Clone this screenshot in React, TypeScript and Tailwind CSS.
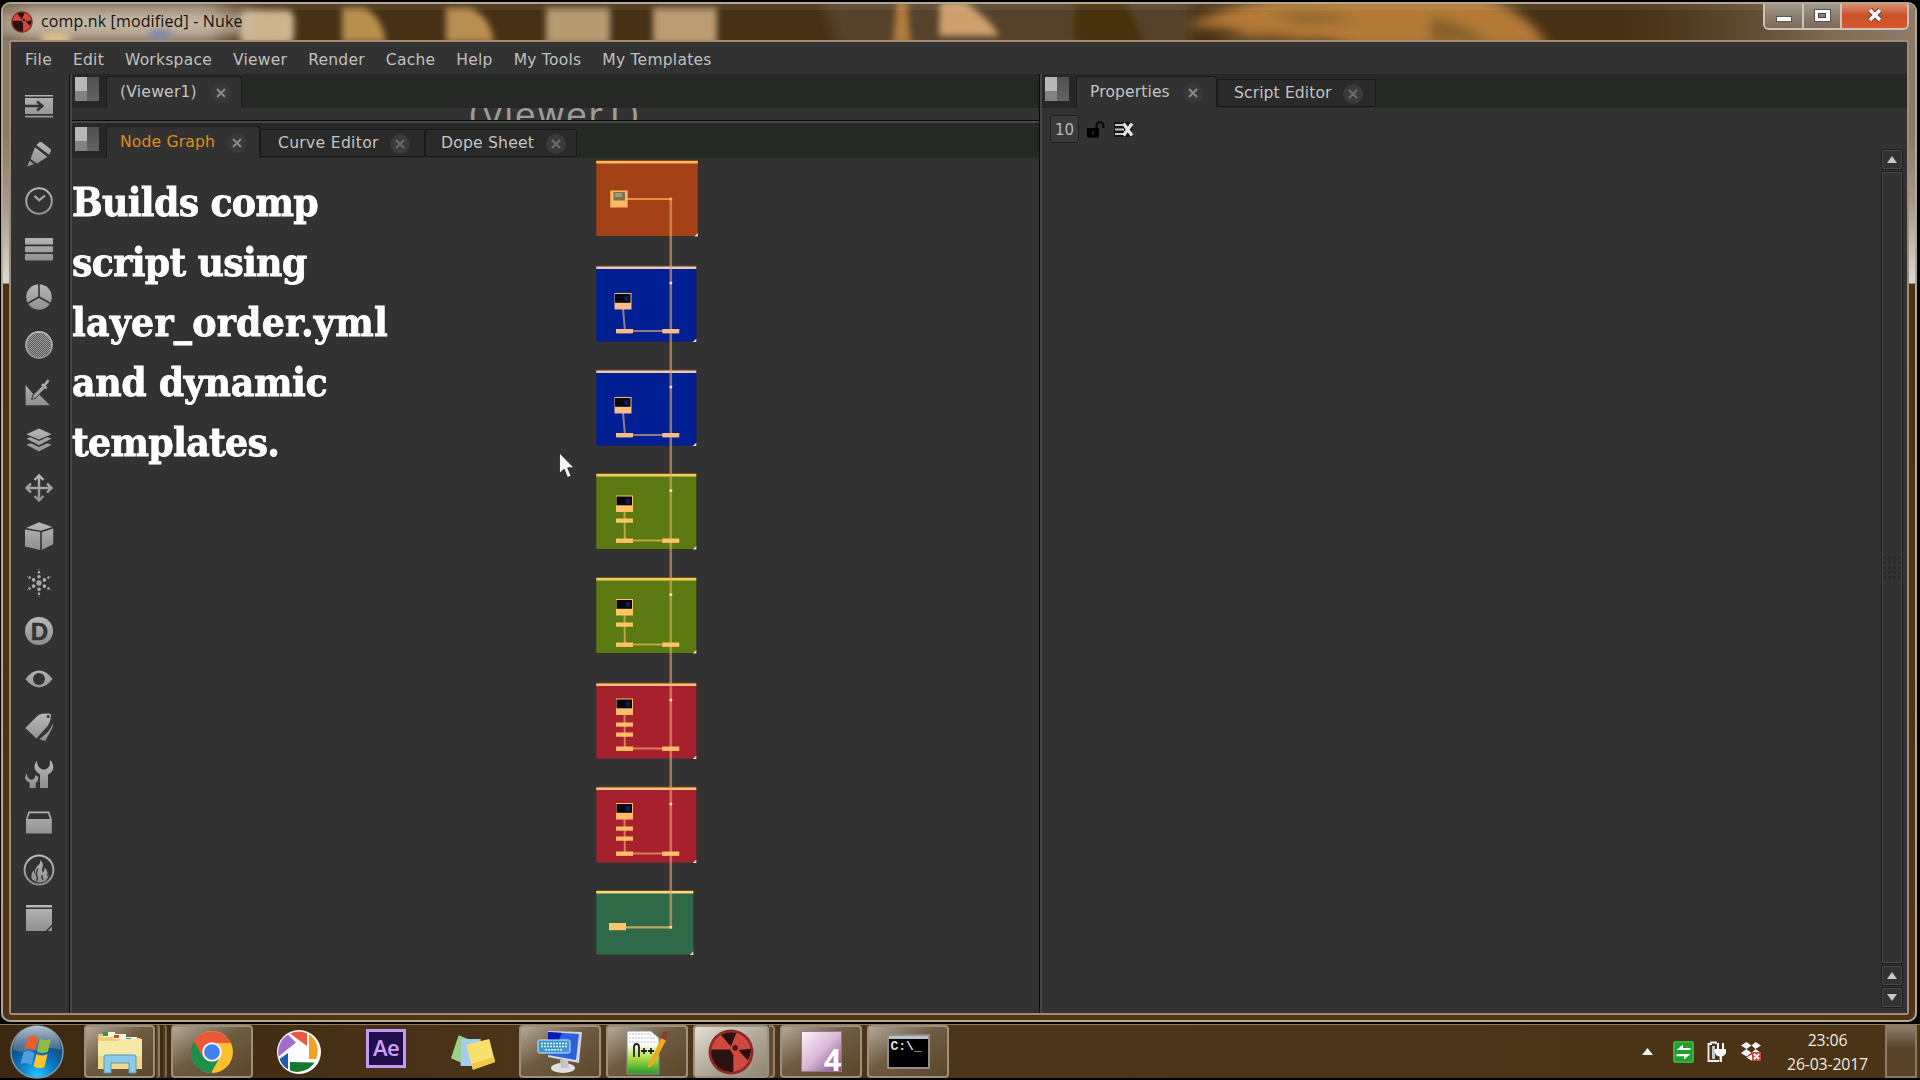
import type { ReactNode } from "react";
import clsx from "clsx";

type Backdrop = {
  y: number;
  w: number;
  h: number;
  fill: string;
  strip: string;
};

type Branch = {
  // top of the backdrop the branch sits in
  y: number;
  readX: number;
  readY: number;
  mergeY: number;
  extra: number[];
  node: string;
};

const backdrops: Backdrop[] = [
  { y: 161, w: 101.5, h: 75, fill: "#a34216", strip: "#ffb964" },
  { y: 266.5, w: 100, h: 75, fill: "#001f92", strip: "#ecc9b4" },
  { y: 370.5, w: 100, h: 75, fill: "#001f92", strip: "#ecc9b4" },
  { y: 474, w: 100, h: 75, fill: "#5b7b12", strip: "#f2d060" },
  { y: 578, w: 100, h: 75, fill: "#5b7b12", strip: "#f2d060" },
  { y: 683.5, w: 100, h: 75, fill: "#a6202e", strip: "#ffc27e" },
  { y: 787.5, w: 100, h: 75, fill: "#a6202e", strip: "#ffc27e" },
  { y: 891, w: 97, h: 63.5, fill: "#2f6948", strip: "#f2d88a" },
];

const branches: Branch[] = [
  { y: 266.5, readX: 614.5, readY: 293, mergeY: 329, extra: [], node: "#f7bd86" },
  { y: 370.5, readX: 614.5, readY: 397, mergeY: 433, extra: [], node: "#f7bd86" },
  { y: 474, readX: 616, readY: 495.5, mergeY: 538.5, extra: [518.5], node: "#fcc463" },
  { y: 578, readX: 616, readY: 599, mergeY: 642.5, extra: [622.5], node: "#fcc463" },
  { y: 683.5, readX: 616, readY: 698.5, mergeY: 746.5, extra: [722.5, 732.5], node: "#ffbd6b" },
  { y: 787.5, readX: 616, readY: 803, mergeY: 851.5, extra: [826.5, 836.5], node: "#ffbd6b" },
];

const menus = [
  "File",
  "Edit",
  "Workspace",
  "Viewer",
  "Render",
  "Cache",
  "Help",
  "My Tools",
  "My Templates",
];

function TitleBackdrop() {
  return (
    <svg
      className="absolute inset-0 h-full w-full"
      viewBox="3 4 1912 36"
      preserveAspectRatio="none"
    >
      <defs>
        <filter id="glass" x="-20%" y="-60%" width="140%" height="220%">
          <feGaussianBlur stdDeviation="3" />
        </filter>
        <filter id="glassMid" x="-20%" y="-60%" width="140%" height="220%">
          <feGaussianBlur stdDeviation="6" />
        </filter>
        <filter id="glassWide" x="-20%" y="-100%" width="140%" height="300%">
          <feGaussianBlur stdDeviation="9" />
        </filter>
        <linearGradient id="titleEnd" x1="0" x2="1" y1="0" y2="0">
          <stop offset="0" stopColor="#5a4728" stopOpacity="0" />
          <stop offset="0.7" stopColor="#7d6a54" />
          <stop offset="1" stopColor="#8d7c68" />
        </linearGradient>
      </defs>
      <rect x="3" y="4" width="1912" height="36" fill="#463115" />
      <path d="M820 -6H1190V50H840z" fill="#56432a" filter="url(#glassMid)" />
      <path d="M1075 0h50l20 44h-70z" fill="#47310f" filter="url(#glass)" />
      <g filter="url(#glass)">
        <rect x="240" y="10" width="54" height="34" rx="8" fill="#cdb58c" />
        <path d="M342 8h22q18 8 22 34h-44z" fill="#b78f4e" />
        <path d="M446 8h24q20 8 24 34h-48z" fill="#b98f51" />
        <rect x="546" y="8" width="64" height="36" fill="#b79a6f" />
        <rect x="653" y="8" width="64" height="36" fill="#bc9c72" />
        <path d="M897 0h10l4 44h-18z" fill="#b07c3e" />
        <path d="M940 2h25q26 18 34 34h-60z" fill="#cfa06d" />
      </g>
      <g filter="url(#glassMid)">
        <path d="M1184 26q50-24 110-30h190q50 20 64 52h-190q-50-14-96-8-30-14-78-14z" fill="#b47a39" />
        <path d="M1210 46q40-20 90-8l20 10z" fill="#6b4c22" />
        <path d="M1270 14q40-8 70 0l20 8-60 4z" fill="#94692f" />
        <path d="M1430 16q40 8 60 26h-60z" fill="#85602a" />
      </g>
      <rect x="-10" y="6" width="230" height="36" fill="#ab9a86" filter="url(#glassWide)" />
      <rect x="20" y="12" width="230" height="22" fill="#c7bba9" filter="url(#glassWide)" />
      <ellipse cx="160" cy="36" rx="12" ry="7" fill="#8587a2" filter="url(#glass)" />
      <ellipse cx="56" cy="38" rx="16" ry="5" fill="#e2c48d" filter="url(#glass)" />
      <rect x="1620" y="4" width="295" height="36" fill="url(#titleEnd)" />
      <rect x="3" y="4" width="1912" height="6" fill="#fff" opacity="0.07" />
    </svg>
  );
}

function NukeLogo({ className }: { className?: string }) {
  return (
    <svg className={className} viewBox="0 0 44 44">
      <circle cx="22" cy="22" r="21.5" fill="#8e2a26" />
      <circle cx="22" cy="22" r="19" fill="#d0493f" />
      <path d="M22 17L12.500 5.500A19 19 0 0 1 27 3.800z" fill="#2a1210" />
      <path d="M21 19.500H3.200a19 19 0 0 0 21 21.500V25z" fill="#2a1210" />
      <path d="M29 20l12-1a19 19 0 0 1-3 11z" fill="#2a1210" />
      <circle cx="26" cy="18" r="4.500" fill="#d0493f" />
      <circle cx="26" cy="18" r="2.700" fill="#4a1815" />
    </svg>
  );
}

function CaptionButtons() {
  return (
    <div className="absolute right-[6px] top-[-2px] flex h-[28px] w-[146px] overflow-hidden rounded-b-[6px] border-2 border-t-0 border-[#cbc3b6]">
      <div className="flex w-[39px] items-center justify-center border-r-2 border-[#cbc3b6] bg-linear-to-b from-[#a89e92] from-0% via-[#8e8172] via-50% to-[#7b6c58]">
        <div className="mt-2 h-[6px] w-[16px] border border-[#555] bg-white" />
      </div>
      <div className="flex w-[38px] items-center justify-center border-r-2 border-[#cbc3b6] bg-linear-to-b from-[#a89e92] from-0% via-[#8e8172] via-50% to-[#7b6c58]">
        <div className="flex h-[13px] w-[17px] items-center justify-center border border-[#555] bg-white">
          <div className="h-[5px] w-[8px] border border-[#444] bg-[#8c8274]" />
        </div>
      </div>
      <div className="flex flex-1 items-center justify-center bg-linear-to-b from-[#e09a80] from-0% via-[#c8532a] via-50% to-[#d8562a]">
        <svg className="h-[14px] w-[18px]" viewBox="0 0 18 14">
          <path d="M4 2l10 10M14 2L4 12" stroke="#5a4038" strokeWidth="5.500" />
          <path d="M4 2l10 10M14 2L4 12" stroke="#fff" strokeWidth="3.500" />
        </svg>
      </div>
    </div>
  );
}

const G = "url(#tool)";
const BG = "#323232";

// Toolbar glyphs, all on a 28x28 grid
const toolIcons: ReactNode[] = [
  <>
    <path d="M0 3h28v1.600H0zM0 6h28v16H0zM0 23.800h28v1.600H0z" fill={G} />
    <path d="M0 14h17M12 9.500l5.500 4.500-5.500 4.500" fill="none" stroke={BG} strokeWidth="2.400" />
  </>,
  <>
    <path d="M11.500 5.200L14.200 2.300q1.300-.8 2.600 0l8.600 6.600q1.200 1.200.4 2.600l-1.800 3.200z" fill={G} />
    <path d="M10 7.200l12.500 9.800-10.500 6.500-6.500-4.500z" fill={G} />
    <path d="M4.600 20.800l4.600 3.200-7 2.500z" fill={G} />
  </>,
  <>
    <circle cx="14" cy="14" r="12.800" fill="none" stroke={G} strokeWidth="2" />
    <path d="M9.500 9l4.700 4.300L20 8.500" fill="none" stroke={G} strokeWidth="2.200" />
  </>,
  <>
    <rect y="3" width="28" height="6.600" rx="1.200" fill={G} />
    <rect y="11.200" width="28" height="6" rx="1.200" fill={G} />
    <rect y="19" width="28" height="6.500" rx="1.200" fill={G} />
  </>,
  <>
    <circle cx="14" cy="14" r="12.800" fill={G} />
    <path d="M14 1v13M14 14L2.500 20.500M14 14l11.500 6.500" stroke={BG} strokeWidth="1.600" />
  </>,
  <>
    <circle cx="14" cy="14" r="12" fill="#5c5c5c" />
    <circle cx="14" cy="14" r="12" fill="url(#dither)" />
    <circle cx="14" cy="14" r="12.900" fill="none" stroke={G} strokeWidth="2" />
  </>,
  <>
    <path d="M.6 7l7.500 9-2 6 5-1.500 3-4L25 27.300H.6z" fill={G} />
    <path d="M6.200 21.600l1.600-5.200 9.800-10 3.600 3.400-9.600 9.800z" fill={BG} />
    <path d="M7.200 21l1.300-4 8.700-8.800 2.200 2.200-8.500 9.100z" fill={G} />
    <path d="M17 6.200l4.600 4.400M18.800 8.200l4.700-6" stroke={G} strokeWidth="2.600" />
  </>,
  <>
    <path d="M14 2.600l12.600 5.600L14 13.600 1.400 8.200z" fill={G} />
    <path d="M1.400 12.500l4.200-1.200 8.400 3.700 8.400-3.700 4.200 1.200L14 19.200z" fill={G} />
    <path d="M1.400 18.800l4.200-1.500 8.400 3.700 8.400-3.700 4.200 1.500L14 25.600z" fill={G} />
  </>,
  <path
    d="M14 2v24M2 14h24M9.500 6L14 1.500 18.500 6M9.500 22l4.500 4.500 4.500-4.500M6 9.500L1.500 14 6 18.500M22 9.500l4.500 4.500-4.500 4.500"
    fill="none"
    stroke={G}
    strokeWidth="2.400"
  />,
  <>
    <path d="M14 .3l13.500 4.600-11.600 3.900L1 6z" fill={G} />
    <path d="M0 7.400l15.200 2.700v18L0 24.400z" fill={G} />
    <path d="M16.800 10.200L28.200 6.500v15.700l-11.400 5.900z" fill={G} />
  </>,
  <g fill={G}>
    <circle cx="14" cy="14" r="2.700" />
    {[0, 60, 120, 180, 240, 300].map((a) => (
      <g key={a} transform={`rotate(${a} 14 14)`}>
        <circle cx="14" cy="7.800" r="1.800" />
        <circle cx="14" cy="3.200" r="1.200" />
        <circle cx="14" cy="0.600" r="0.600" opacity="0.600" />
      </g>
    ))}
  </g>,
  <>
    <circle cx="14" cy="14" r="14" fill={G} />
    <text
      x="14.300"
      y="22.600"
      textAnchor="middle"
      fill={BG}
      stroke={BG}
      strokeWidth="0.500"
      fontFamily="Liberation Sans, sans-serif"
      fontSize="24"
      fontWeight="700"
    >
      D
    </text>
  </>,
  <>
    <path d="M.4 14Q7 5.600 14 5.600T27.600 14Q21 22.400 14 22.400T.4 14z" fill={G} />
    <circle cx="14" cy="14" r="6" fill={BG} />
  </>,
  <>
    <path d="M.3 15L12.300 3q2-2 5-2.200l6.300-.3q2.600 0 2.400 2.600-.2 5-3 9.400L11.500 25.500z" fill={G} />
    <circle cx="23.200" cy="3.600" r="1.500" fill={BG} />
    <path d="M27.800 10.500q.4 3-1.600 6.500l-6 11-5.800-1.800q8-6 10.400-9.600 1.800-3 3-6.100z" fill={G} />
  </>,
  <>
    <path d="M11.500.8Q8.500 6 10 9.500q1.300 3.200 5 5V28h8V14.500q5-2.500 5.300-7Q28.300 3 25 0l-.3 5.500q-2.400 4-5.500 4-3.400 0-6.200-3.600z" fill={G} />
    <path d="M1.800 13.500Q-1 17 1 20q1 1.600 3.600 2.600V28h6.200l-.1-5q3-1.800 2.600-6.300l-3-1.500-.3 2.300q-1.600 2.300-3.500 2.300-2.300 0-4-2.700z" fill={G} />
  </>,
  <>
    <path d="M1.600 11.500L4 4.400h19.600L26 11.500" fill="none" stroke={G} strokeWidth="1.600" />
    <path d="M1 11h25.800v14.500H1z" fill={G} />
  </>,
  <>
    <circle cx="14" cy="14" r="14.400" fill="none" stroke={G} strokeWidth="2" />
    <path
      d="M7 23.500Q5 18 9 14q-.2 3 1.200 4Q9 12 14 8.500 15.500 7 15.300 4q4 4 1.900 8-1 2.500.5 4.500 2-1.500 1.800-5 4.500 4.500 2.300 9l2-2q-.5 4-3.300 6.500Q14 28.500 7 23.500z"
      fill={G}
    />
    <path d="M13 12.500q-3 5.500-.5 9 .2 2-1 3.300M17 19q-.5 3 1 5" fill="none" stroke={BG} strokeWidth="1.300" />
  </>,
  <>
    <path d="M1 1h26v2.600H1zM1 5h26v15.500L20.500 27H1z" fill={G} />
    <path d="M27 22.500V27h-4.500z" fill={G} />
  </>,
];

function Toolbar() {
  return (
    <div className="flex w-[58px] shrink-0 flex-col items-center bg-[#323232] pt-2">
      <svg className="h-0 w-0">
        <defs>
          <linearGradient id="tool" gradientUnits="userSpaceOnUse" x1="0" y1="0" x2="0" y2="28">
            <stop offset="0" stopColor="#b9b9b9" />
            <stop offset="1" stopColor="#8e8e8e" />
          </linearGradient>
          <pattern id="dither" width="2" height="2" patternUnits="userSpaceOnUse">
            <rect width="1" height="1" fill="#9a9a9a" />
            <rect x="1" y="1" width="1" height="1" fill="#9a9a9a" />
          </pattern>
        </defs>
      </svg>
      {toolIcons.map((icon, i) => (
        <div key={i} className="flex h-[47.76px] w-full items-center justify-center pr-[2px]">
          <svg className="h-[28px] w-[28px] overflow-visible" viewBox="0 0 28 28">
            {icon}
          </svg>
        </div>
      ))}
    </div>
  );
}

function PaneHandle() {
  return (
    <div className="mt-[3px] ml-[3px] mr-[7px] flex h-[24px] w-[24px] shrink-0">
      <div className="flex w-[12px] flex-col">
        <div className="h-[14px] bg-[#b8b8b8]" />
        <div className="flex-1 bg-[#828282]" />
      </div>
      <div className="flex-1 bg-linear-to-b from-[#505050] to-[#626262]" />
    </div>
  );
}

type TabProps = {
  label: string;
  active?: boolean;
  focused?: boolean;
  className?: string;
};

function Tab({ label, active, focused, className }: TabProps) {
  return (
    <div
      className={clsx(
        "flex shrink-0 items-center text-[15.6px] whitespace-nowrap",
        active
          ? "mt-[2px] h-[32px] rounded-t-[3px] border border-b-0 border-[#1a1b1a] bg-[#323232]"
          : "mt-[5px] h-[28px] rounded-[2px] border border-[#171817] bg-[#292a29] pt-[2px]",
        focused ? "text-[#e08a1e]" : "text-[#c4c4c4]",
        className,
      )}
    >
      <span>{label}</span>
      <span
        className={clsx(
          "ml-auto flex h-[20px] w-[20px] items-center justify-center rounded-full",
          active ? "bg-[#383838]" : "bg-[#3a3a3a]",
        )}
      >
        <svg className="h-[10px] w-[10px]" viewBox="0 0 10 10">
          <path
            d="M1 1l8 8M9 1L1 9"
            stroke={active ? "#868686" : "#6c6c6c"}
            strokeWidth="2.200"
          />
        </svg>
      </span>
    </div>
  );
}

function BranchNodes({ b }: { b: Branch }) {
  const mid = 624.3;
  return (
    <g>
      <path
        d={`M${b.readX + 8.5} ${b.readY + 15}L${mid + 0.5} ${b.mergeY}V${b.mergeY + 2}H670`}
        fill="none"
        stroke={b.node}
        strokeWidth="2"
        opacity="0.600"
      />
      <rect x={b.readX} y={b.readY} width="17" height="16.500" fill={b.node} />
      <rect x={b.readX + 0.5} y={b.readY + 1} width="15.500" height="8.800" fill="#07070f" />
      <rect x={b.readX + 10} y={b.readY + 3} width="4" height="5" fill="#101a5c" />
      {b.extra.map((y) => (
        <rect key={y} x="616" y={y} width="17" height="4.200" fill={b.node} />
      ))}
      <rect x="616" y={b.mergeY} width="17" height="4.400" fill={b.node} />
      <rect x="662.300" y={b.mergeY} width="17" height="4.400" fill={b.node} />
      <circle cx="670.800" cy={b.y + 16.5} r="1.500" fill="#ffe0b0" />
    </g>
  );
}

function NodeGraph() {
  return (
    <svg className="absolute inset-0 h-full w-full" viewBox="72 158 967 855">
      {backdrops.map((b) => (
        <g key={b.y}>
          <rect x="596.300" y={b.y} width={b.w} height={b.h} fill={b.fill} />
          <rect x="596.300" y={b.y - 1} width={b.w} height="1" fill="#7a4a10" />
          <rect x="596.300" y={b.y} width={b.w} height="2.500" fill={b.strip} />
          <path
            d={`M${596.3 + b.w} ${b.y + b.h - 3}v3.500h-3.500z`}
            fill="#e8e0d0"
          />
        </g>
      ))}
      <path d="M670.800 199V927.300" stroke="#e8a868" strokeWidth="2.600" opacity="0.600" fill="none" />
      <path d="M627 199H672" stroke="#ff9a52" strokeWidth="2.200" opacity="0.800" />
      <rect x="669.500" y="197.700" width="2.600" height="2.600" fill="#ffb070" />
      <rect x="610.300" y="190.500" width="17.300" height="17" fill="#ffb964" />
      <rect x="613.500" y="192" width="11.500" height="8.500" fill="#7d7350" />
      <rect x="615" y="193" width="7" height="4" fill="#a19a72" />
      {branches.map((b) => (
        <BranchNodes key={b.y} b={b} />
      ))}
      <path d="M626 927.300H672" stroke="#dcb070" strokeWidth="2.200" opacity="0.850" />
      <rect x="609" y="923" width="17" height="7.200" fill="#ffc66c" />
      <rect x="669.500" y="926" width="2.600" height="2.600" fill="#ffe0a0" />
      <path
        d="M559.500 453v20.500l4.600-4.300 3.400 8.300 3.700-1.500-3.500-8.200h6.300z"
        fill="#f4f4f4"
        stroke="#1e1e1e"
        strokeWidth="0.800"
      />
    </svg>
  );
}

function ScrollButton({ down }: { down?: boolean }) {
  return (
    <div className="flex h-[21px] items-center justify-center rounded-[2px] border border-[#1c1c1c] bg-[#323232] inset-ring inset-ring-[#484848]">
      <svg className="h-[7px] w-[10px]" viewBox="0 0 10 7">
        <path d={down ? "M0 0h10L5 7z" : "M0 7h10L5 0z"} fill="#c6c6c6" />
      </svg>
    </div>
  );
}

function PropertiesPane() {
  return (
    <div className="flex min-w-0 flex-1 flex-col bg-[#323232]">
      <div className="flex h-[34px] bg-[#262825]">
        <PaneHandle />
        <Tab label="Properties" active className="w-[141px] pl-[13px] pr-[13px] tracking-[0.1px]" />
        <Tab label="Script Editor" className="w-[159px] pl-[16px] pr-[12px] tracking-[0.1px]" />
      </div>
      <div className="flex h-[41px] items-center gap-[8px] pt-[1px] pl-[8px]">
        <div className="flex h-[28px] w-[29px] items-center justify-center rounded-[3px] border border-[#1f1f1f] bg-[#3a3a3a] pt-[2px] text-[15px] text-[#b8b8b8]">
          10
        </div>
        <svg className="h-[18px] w-[18px]" viewBox="0 0 18 18">
          <rect x="0" y="8" width="12" height="9.500" rx="1" fill="#000" />
          <path d="M9.500 8V5.500a3.400 3.400 0 0 1 6.800 0V8" fill="none" stroke="#0a0a0a" strokeWidth="2.300" />
          <path d="M6 11v4" stroke="#333" strokeWidth="1.300" />
        </svg>
        <svg className="ml-[1px] h-[15px] w-[20px]" viewBox="0 0 20 15">
          <rect width="18" height="15" rx="1" fill="#141414" />
          <path d="M1 3h9M1 7.500h9M1 12h9" stroke="#c4c4c4" strokeWidth="2.200" />
          <path d="M9.500 1.500l8.500 12M18 1.500l-8.500 12" stroke="#e2e2e2" strokeWidth="3.200" />
        </svg>
      </div>
      <div className="flex min-h-0 flex-1 justify-end pr-[4px] pb-[5px]">
        <div className="flex w-[22px] flex-col gap-[1px]">
          <ScrollButton />
          <div className="flex flex-1 items-center justify-center border border-[#1c1c1c] bg-[#323232] inset-ring inset-ring-[#484848]">
            <div className="grid grid-cols-4 gap-[2px]">
              {Array.from({ length: 20 }, (_, i) => (
                <div key={i} className="h-[3px] w-[3px] bg-[#2a2a2a]" />
              ))}
            </div>
          </div>
          <ScrollButton />
          <ScrollButton down />
        </div>
      </div>
    </div>
  );
}

function LeftPane() {
  return (
    <div className="flex w-[967px] shrink-0 flex-col">
      <div className="flex h-[34px] bg-[#262825]">
        <PaneHandle />
        <Tab label="(Viewer1)" active className="w-[136px] pl-[13px] pr-[10px] tracking-[0.2px]" />
      </div>
      <div className="relative h-[12px] overflow-hidden bg-[#323232]">
        <div className="absolute top-[-14px] left-[396px] text-[34px] leading-[42px] tracking-[1.3px] text-[#9c9c9c]">
          (viewer1)
        </div>
      </div>
      <div className="h-[1px] bg-[#0c0c0c]" />
      <div className="h-[2px] bg-[#454545]" />
      <div className="flex h-[35px] bg-[#262825] pt-[1px]">
        <PaneHandle />
        <Tab label="Node Graph" active focused className="w-[154px] pl-[13px] pr-[12px] tracking-[0.15px]" />
        <Tab label="Curve Editor" className="w-[165px] pl-[17px] pr-[14px] tracking-[0.3px]" />
        <Tab label="Dope Sheet" className="w-[152px] pl-[15px] pr-[10px] tracking-[0.2px]" />
      </div>
      <div className="relative min-h-0 flex-1 bg-[#323232]">
        <NodeGraph />
        <div className="relative w-fit origin-left scale-x-[0.91] pt-[14px] font-['DejaVu_Serif'] text-[40px] leading-[60px] font-bold tracking-[-0.8px] whitespace-nowrap text-white [-webkit-text-stroke:0.8px_white]">
          <p>Builds comp</p>
          <p>script using</p>
          <p className="tracking-[0.2px]">layer_order.yml</p>
          <p className="tracking-[-0.4px]">and dynamic</p>
          <p>templates.</p>
        </div>
      </div>
    </div>
  );
}

type TaskButtonProps = {
  className: string;
  stacked?: boolean;
  lit?: boolean;
  children: ReactNode;
};

function TaskButton({ className, stacked, lit, children }: TaskButtonProps) {
  return (
    <div className={clsx("flex shrink-0", className)}>
      <div
        className={clsx(
          "flex flex-1 items-center justify-center rounded-[4px] border-2 border-[#9c8f7b]",
          lit
            ? "bg-linear-to-br from-[#e4dfd6] via-[#b3aa9b] to-[#91856f]"
            : "bg-linear-to-br from-[#b3a998] via-[#6e5c42] via-45% to-[#5b4628]",
        )}
      >
        {children}
      </div>
      {stacked ? (
        <div className="w-[6px] rounded-r-[4px] border-2 border-l-0 border-[#8d7f6a] bg-[#5e4c33]" />
      ) : null}
    </div>
  );
}

function StartOrb() {
  return (
    <svg className="h-[54px] w-[54px] shrink-0" viewBox="0 0 54 54">
      <defs>
        <radialGradient id="orb" cx="0.5" cy="0.95" r="0.9">
          <stop offset="0" stopColor="#20c4ff" />
          <stop offset="0.4" stopColor="#0b78c4" />
          <stop offset="0.75" stopColor="#124a7c" />
          <stop offset="1" stopColor="#3c5a72" />
        </radialGradient>
        <linearGradient id="orbTop" x1="0" x2="0" y1="0" y2="1">
          <stop offset="0" stopColor="#cfdbe3" />
          <stop offset="1" stopColor="#5f7f96" stopOpacity="0.700" />
        </linearGradient>
      </defs>
      <circle cx="27" cy="27" r="26" fill="url(#orb)" stroke="#7d97a8" strokeWidth="1.500" />
      <path d="M3 25a24 24 0 0 1 48 0q-12-4-24 0T3 25z" fill="url(#orbTop)" opacity="0.800" />
      <path d="M18 12.500q5-3.500 10 0L25 25.500q-5-3.500-11-.5z" fill="#e8602c" />
      <path d="M30 13.500q5 3 11 .5L38 26.500q-6 3-11 0z" fill="#8dbb44" />
      <path d="M13.500 27.500q6-3 11 .5L21.500 40q-5-3.500-11-1z" fill="#4d9fe0" />
      <path d="M26.500 29q5.500 3 11 0L34.500 42q-6 3-11-1z" fill="#ffc52e" />
    </svg>
  );
}

function Taskbar() {
  return (
    <div className="flex h-[54px] items-stretch border-t border-[#8c7d66] bg-linear-to-r from-[#3b2810] from-0% via-[#4d361a] via-30% to-[#4b3316]">
      <div className="flex w-[84px] items-center pl-[10px]">
        <StartOrb />
      </div>
      <TaskButton className="w-[71px]">
        <svg className="h-[44px] w-[46px]" viewBox="0 0 46 44">
          <path d="M1 6q0-2 2-2h14l3 4h22q2 0 2 2v28H1z" fill="#e9cf78" />
          <path d="M6 2h12v5H6zM17 4h12v5H17zM28 7h12v5H28z" fill="#f5f2e6" />
          <path d="M6 2h5v4H6z" fill="#2f9a3a" />
          <path d="M17 5h5v3h-5z" fill="#c2542c" />
          <path d="M29 8h5v3h-5z" fill="#3a8ec2" />
          <path d="M1 11h20l2-2h22v30H1z" fill="#f7e8a6" />
          <path d="M1 26h44v13H1z" fill="#f0d98a" />
          <path d="M7 43V27q0-2 2-2h28q2 0 2 2v16h-7V33H14v10z" fill="#8ec9e8" stroke="#4f9cc8" />
        </svg>
      </TaskButton>
      <div className="flex w-[16px] gap-[3px] pl-[1px]">
        <div className="w-[4px] rounded-r-[3px] border-r-2 border-[#8a7b66] bg-[#5a4629]" />
        <div className="w-[4px] rounded-r-[3px] border-r-2 border-[#75664f] bg-[#4f3b1f]" />
      </div>
      <TaskButton className="w-[82px]">
        <svg className="h-[44px] w-[44px]" viewBox="0 0 44 44">
          <circle cx="22" cy="22" r="21" fill="#fbc02d" />
          <path d="M22 22L3.800 11.500A21 21 0 0 0 22 43z" fill="#1e8e4a" />
          <path d="M3.800 11.500A21 21 0 0 1 40.800 13H22l-9 14z" fill="#e8593a" />
          <path d="M12 27L3.800 11.500A21 21 0 0 0 21 43l9-16z" fill="#1e8e4a" />
          <circle cx="22" cy="22" r="9.800" fill="#f4f4f4" />
          <circle cx="22" cy="22" r="7.800" fill="#3f80ea" />
        </svg>
      </TaskButton>
      <div className="flex w-[92px] items-center justify-center">
        <svg className="h-[46px] w-[46px]" viewBox="0 0 46 46">
          <circle cx="23" cy="23" r="22" fill="#fff" />
          <path d="M14 4.500A20.500 20.500 0 0 1 31 4.200V17z" fill="#ec5b41" />
          <path d="M33 5a20.500 20.500 0 0 1 7 25h-7z" fill="#f4a023" />
          <path d="M38.500 33.500A20.500 20.500 0 0 1 14 41.500V33z" fill="#167a2c" />
          <path d="M12 40.500A20.500 20.500 0 0 1 3.500 30L12 24z" fill="#1f5cae" />
          <path d="M2.700 27.500A20.500 20.500 0 0 1 12 5.500l8 8z" fill="#a06fce" />
        </svg>
      </div>
      <div className="flex w-[82px] items-start justify-center pt-[4px]">
        <div className="flex h-[39px] w-[40px] items-center justify-center border-[3px] border-[#c39af0] bg-[#1f0f4a] pb-[2px] font-['Open_Sans'] text-[22px] font-semibold tracking-[-0.5px] text-[#cfa0ff]">
          Ae
        </div>
      </div>
      <div className="flex w-[92px] items-center justify-center pt-[1px]">
        <svg className="h-[39px] w-[46px]" viewBox="0 0 48 40">
          <path d="M9 2l20 8-9 24L1 26z" fill="#9ccf8e" />
          <path d="M12 6h20v28H11z" fill="#a3cdee" />
          <path d="M17 12l24-6 6 24-23 8z" fill="#f9e06c" />
          <path d="M24 38l23-8-1-5-24 7z" fill="#f0c94a" />
        </svg>
      </div>
      <TaskButton className="w-[82px]">
        <svg className="h-[44px] w-[46px]" viewBox="0 0 46 44">
          <ellipse cx="26" cy="38" rx="12" ry="5" fill="#e0e0e0" />
          <path d="M23 30h8l1 8h-8z" fill="#c4c4c4" />
          <path d="M11 1l34 1-3 31-31-6z" fill="#cfd6e2" />
          <path d="M11 2l31 2-3 26-28-5z" fill="#2b62dc" />
          <path d="M11 2l14 1-9 20-5-1z" fill="#0b1bb4" />
          <rect x="1" y="10" width="32" height="13" rx="1.500" fill="#3f97d2" stroke="#cfe6f5" />
          <path d="M4 13.500h26M4 16.500h26M8 19.800h18" stroke="#e8f4fb" strokeWidth="1.600" strokeDasharray="2 1" />
        </svg>
      </TaskButton>
      <TaskButton className="ml-[5px] w-[82px]">
        <svg className="h-[46px] w-[44px]" viewBox="0 0 44 46">
          <defs>
            <linearGradient id="npp" x1="0" x2="0" y1="0" y2="1">
              <stop offset="0.300" stopColor="#fff" />
              <stop offset="0.600" stopColor="#b7e04a" />
              <stop offset="1" stopColor="#1f9a28" />
            </linearGradient>
          </defs>
          <path d="M2 2h24l8 7v36H2z" fill="url(#npp)" stroke="#8a8a8a" />
          <path d="M4 5h22M4 9h26M4 13h28" stroke="#b9bcc0" strokeDasharray="2 1" />
          <path d="M9 28V18q0-3 2.500-3t2.500 3v10M16 22h6M19 19v6M23 22h6M26 19v6" fill="none" stroke="#222" strokeWidth="1.800" />
          <path d="M23 37l13-28 5 2.500L28 36l-5 3z" fill="#f0a91d" />
          <path d="M36 9l2-6q3-2 5 1l-2 7z" fill="#8c3b34" />
        </svg>
      </TaskButton>
      <TaskButton className="ml-[5px] w-[82px]" stacked lit>
        <NukeLogo className="h-[46px] w-[46px]" />
      </TaskButton>
      <TaskButton className="ml-[5px] w-[82px]">
        <div className="relative h-[41px] w-[41px] border border-[#8a7d90] bg-linear-to-br from-[#fbf3fa] via-[#d9b7d6] to-[#7d4e86]">
          <div className="absolute right-[-1px] bottom-[-6px] font-['Open_Sans'] text-[31px] leading-[36px] font-bold text-white">
            4
          </div>
        </div>
      </TaskButton>
      <TaskButton className="ml-[5px] w-[82px]">
        <div className="flex h-[35px] w-[43px] flex-col border-2 border-[#8e8e8e] bg-black">
          <div className="h-[3px] bg-[#b8c0c8]" />
          <div className="pl-[2px] font-['Liberation_Mono'] text-[13px] leading-[16px] font-bold whitespace-nowrap text-[#e0e0e0]">
            C:\_
          </div>
        </div>
      </TaskButton>
      <div className="flex flex-1 items-center justify-end">
        <svg className="mr-[20px] h-[7px] w-[11px]" viewBox="0 0 11 7">
          <path d="M0 7h11L5.500 0z" fill="#f2f2f2" />
        </svg>
        <svg className="mr-[13px] h-[22px] w-[21px]" viewBox="0 0 21 22">
          <rect width="21" height="22" rx="2" fill="#22a02a" />
          <rect x="1" y="1" width="19" height="20" rx="1.500" fill="none" stroke="#4fc451" />
          <path d="M3.500 9h14V7H10V3.500zM17.500 13h-14v2.200H11V18.500z" fill="#fff" />
        </svg>
        <svg className="mr-[14px] h-[22px] w-[20px]" viewBox="0 0 20 22">
          <path d="M9 3V1.500H4V3H1.500v17H12" fill="none" stroke="#f2f2f2" strokeWidth="1.800" />
          <path d="M5 5h3v13H5z" fill="#c9c9c9" />
          <path d="M8 8h11v4q-1 3-4 3.500V21h-2.400v-5.500Q9 15 8 12zM10 2h2v6h-2zM15 2h2v6h-2z" fill="#fff" />
        </svg>
        <svg className="mr-[24px] h-[20px] w-[21px]" viewBox="0 0 21 20">
          <path d="M5.500 0l5 3.500-5 3.500L0 3.500zM14.500 0L20 3.500 14.500 7l-4-3.500zM5.500 7l5 4-5 3.500L0 11zM14.500 7l5.500 4-5.500 3.500-4-3.500zM5.500 15.500l4.800-3 4.500 3-4.500 3z" fill="#f4f4f4" />
          <rect x="11" y="10" width="9" height="9" rx="1" fill="#d8433c" />
          <path d="M13 12l5 5M18 12l-5 5" stroke="#fff" strokeWidth="1.800" />
        </svg>
        <div className="mr-[16px] flex w-[83px] flex-col items-center font-['Open_Sans'] text-[15.8px] leading-[24px] tracking-[-0.15px] whitespace-nowrap text-[#f0ece6]">
          <span>23:06</span>
          <span>26-03-2017</span>
        </div>
        <div className="mr-[3px] h-full w-[32px] border-2 border-[#8b7b65] bg-linear-to-b from-[#8b7d69] via-[#55422a] via-45% to-[#5b4426]" />
      </div>
    </div>
  );
}

export default function App() {
  return (
    <div className="flex h-[1080px] w-[1920px] flex-col overflow-hidden bg-black pt-[2px] font-['DejaVu_Sans']">
      <div className="ml-[1px] flex h-[1020px] w-[1916px] flex-col overflow-hidden rounded-[9px] border-2 border-[#b5a690] bg-[linear-gradient(to_bottom,#8b7a68_0px,#8b7a68_130px,#a39a8c_200px,#d9d8d0_275px,#d9d8d0_279px,#4b3214_280px,#4f3416_1020px)]">
        <div className="relative h-[36px] shrink-0">
          <TitleBackdrop />
          <div className="relative flex h-full items-center gap-[8px] pl-[8px]">
            <NukeLogo className="h-[22px] w-[22px]" />
            <span className="pb-[2px] font-['Open_Sans'] text-[16px] tracking-[0.14px] text-[#15120e]">
              comp.nk [modified] - Nuke
            </span>
          </div>
          <CaptionButtons />
        </div>
        <div className="mx-[6px] mb-[5px] flex min-h-0 flex-1 flex-col overflow-hidden rounded-[3px] border-2 border-[#a08c74] bg-[#323232]">
          <div className="flex h-[32px] shrink-0 items-center gap-[21px] pl-[14px] pt-[5px] text-[15.5px] tracking-[0.25px] text-[#c0c0c0]">
            {menus.map((m) => (
              <span key={m} className="whitespace-nowrap">
                {m}
              </span>
            ))}
          </div>
          <div className="flex min-h-0 flex-1">
            <Toolbar />
            <div className="w-[1px] shrink-0 bg-[#0c0c0c]" />
            <div className="w-[2px] shrink-0 bg-[#444444]" />
            <LeftPane />
            <div className="w-[1px] shrink-0 bg-[#0c0c0c]" />
            <div className="w-[2px] shrink-0 bg-[#444444]" />
            <PropertiesPane />
          </div>
        </div>
      </div>
      <div className="h-[2px] shrink-0" />
      <Taskbar />
    </div>
  );
}
